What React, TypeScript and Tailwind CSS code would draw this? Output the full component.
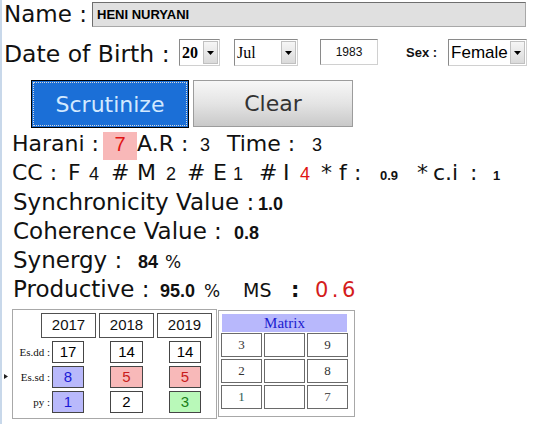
import React from "react";

const LS = "font-['Liberation_Sans',Arial,sans-serif]";
const TN = "font-['Liberation_Serif','Times_New_Roman',serif]";

function Arrow() {
  return (
    <div className="w-[15px] my-[1px] mr-[1px] flex items-center justify-center bg-gradient-to-b from-[#f6f6f6] to-[#dadada] border border-[#c0c0c0]">
      <svg width="7" height="4" viewBox="0 0 7 4">
        <path d="M0 0H7L3.5 4Z" fill="#000" />
      </svg>
    </div>
  );
}

function Sel({ w, children }: { w: string; children: React.ReactNode }) {
  return (
    <div className={"flex h-[27px] bg-white border border-[#8a8a8a] border-r-[#d0d0d0] border-b-[#d0d0d0] " + w}>
      <div className="flex-1 flex items-center pl-[2px] overflow-hidden">{children}</div>
      <Arrow />
    </div>
  );
}

function Cell({ w, bg, color, children }: { w: string; bg: string; color: string; children?: React.ReactNode }) {
  return (
    <div className={"h-[22px] flex items-center justify-center border border-[#454545] text-[15px] " + LS + " " + w + " " + bg + " " + color}>
      {children}
    </div>
  );
}

function MCell({ children, color }: { children?: React.ReactNode; color?: string }) {
  return (
    <div className={"w-[41px] h-[24px] flex items-center justify-center border border-[#6a6a6a] text-[13px] " + TN + " " + (color ?? "text-[#333]")}>
      {children}
    </div>
  );
}

export default function App() {
  return (
    <div className="relative w-[536px] h-[424px] overflow-hidden bg-white border-l-2 border-[#c8d8ea] font-['DejaVu_Sans',sans-serif] text-[#111]">
      {/* Name row */}
      <div className="flex h-[29px]">
        <div className="w-[90px] pl-[2px] text-[23px] leading-[29px] whitespace-nowrap">Name :</div>
        <div className="mt-[2px] w-[434px] h-[25px] bg-[#e0e0e0] border border-[#a8a8a8] border-t-[#6e6e6e] border-l-[#6e6e6e] pl-[4px] flex items-center">
          <span className={"text-[13px] font-bold text-black " + LS}>HENI NURYANI</span>
        </div>
      </div>

      {/* Date row */}
      <div className="flex items-start mt-[10px] h-[28px]">
        <div className="w-[177px] pl-[2px] text-[23.5px] leading-[30px] whitespace-nowrap">Date of Birth :</div>
        <Sel w="w-[41px]">
          <span className={"text-[16px] font-bold text-black " + TN}>20</span>
        </Sel>
        <div className="ml-[14px]">
          <Sel w="w-[64px]">
            <span className={"text-[16px] text-black " + TN}>Jul</span>
          </Sel>
        </div>
        <div className={"ml-[22px] w-[58px] h-[26px] border border-[#8a8a8a] border-r-[#d0d0d0] border-b-[#d0d0d0] flex items-center justify-center text-[12px] " + LS}>
          1983
        </div>
        <div className={"ml-[28px] h-[27px] flex items-center text-[13px] font-bold " + LS}>Sex :</div>
        <div className="ml-[11px]">
          <Sel w="w-[79px]">
            <span className={"text-[17px] text-black " + LS}>Female</span>
          </Sel>
        </div>
      </div>

      {/* Buttons */}
      <div className="flex mt-[13px] ml-[29px] items-start">
        <div className="w-[158px] h-[48px] border border-black p-[1px] bg-[#1b6fd7]">
          <div className="w-full h-full border border-dotted border-[#d8d8d8] flex items-center justify-center text-[22px] text-[#d2e9ff]">
            Scrutinize
          </div>
        </div>
        <div className="ml-[4px] w-[160px] h-[47px] border border-[#9c9c9c] bg-gradient-to-b from-[#f7f7f7] via-[#e4e4e4] to-[#c9c9c9] flex items-center justify-center text-[22px] text-[#333]">
          Clear
        </div>
      </div>

      {/* Result lines */}
      <div className="mt-[1px] pl-[10px] whitespace-pre">
        <div className="flex items-baseline h-[29.3px] text-[22px] leading-[29.3px]">
          <span className="w-[91px] shrink-0">Harani :</span>
          <span className={"inline-block w-[34px] h-[28px] shrink-0 bg-[#f8b8b8] text-center text-[20px] leading-[25px] text-[#e01414] " + LS}>7</span>
          <span className="w-[63px] shrink-0">A.R :</span>
          <span className={"w-[27px] shrink-0 text-[18px] " + LS}>3</span>
          <span className="w-[85px] shrink-0">Time :</span>
          <span className={"text-[18px] " + LS}>3</span>
        </div>
        <div className="flex items-baseline h-[29.3px] text-[22px] leading-[29.3px]">
          <span className="w-[56px] shrink-0">CC :</span>
          <span className="w-[21px] shrink-0">F</span>
          <span className={"w-[22px] shrink-0 text-[18px] " + LS}>4</span>
          <span className="w-[26px] shrink-0">#</span>
          <span className="w-[29px] shrink-0">M</span>
          <span className={"w-[21px] shrink-0 text-[18px] " + LS}>2</span>
          <span className="w-[26px] shrink-0">#</span>
          <span className="w-[20px] shrink-0">E</span>
          <span className={"w-[26px] shrink-0 text-[18px] " + LS}>1</span>
          <span className="w-[24px] shrink-0">#</span>
          <span className="w-[17px] shrink-0">I</span>
          <span className={"w-[21px] shrink-0 text-[18px] text-[#e01414] " + LS}>4</span>
          <span className="w-[18px] shrink-0">*</span>
          <span className="w-[15px] shrink-0">f</span>
          <span className="w-[26px] shrink-0">:</span>
          <span className={"w-[37px] shrink-0 text-[13px] font-bold " + LS}>0.9</span>
          <span className="w-[16px] shrink-0">*</span>
          <span className="w-[37px] shrink-0">c.i</span>
          <span className="w-[23px] shrink-0">:</span>
          <span className={"text-[13px] font-bold " + LS}>1</span>
        </div>
        <div className="flex items-baseline h-[29.3px] text-[23px] leading-[29.3px]">
          <span className="w-[246px] shrink-0 pl-[1px]">Synchronicity Value :</span>
          <span className={"text-[18px] font-bold " + LS}>1.0</span>
        </div>
        <div className="flex items-baseline h-[29.3px] text-[23px] leading-[29.3px]">
          <span className="w-[222px] shrink-0 pl-[1px]">Coherence Value :</span>
          <span className={"text-[18px] font-bold " + LS}>0.8</span>
        </div>
        <div className="flex items-baseline h-[29.3px] text-[23px] leading-[29.3px]">
          <span className="w-[126px] shrink-0 pl-[1px]">Synergy :</span>
          <span className={"w-[27px] shrink-0 text-[18px] font-bold " + LS}>84</span>
          <span className="text-[17px]">%</span>
        </div>
        <div className="flex items-baseline h-[29.3px] text-[23px] leading-[29.3px]">
          <span className="w-[148px] shrink-0 pl-[1px]">Productive :</span>
          <span className={"w-[44px] shrink-0 text-[18px] font-bold " + LS}>95.0</span>
          <span className="w-[39px] shrink-0 text-[17px]">%</span>
          <span className="w-[48px] shrink-0 text-[19px]">MS</span>
          <span className="w-[24px] shrink-0 text-[21px] font-bold">:</span>
          <span className="text-[21px] tracking-[3.5px] text-[#d41c1c]">0.6</span>
        </div>
      </div>

      {/* Bottom panels */}
      <div className="flex mt-[4px] ml-[10px] items-start">
        <div className="w-[205px] h-[110px] border border-[#a8a8a8]">
          <div className="flex mt-[3px] ml-[28px] gap-[3px]">
            {["2017", "2018", "2019"].map((y) => (
              <div key={y} className={"w-[55px] h-[25px] border border-[#505050] flex items-center justify-center text-[15px] " + LS}>
                {y}
              </div>
            ))}
          </div>
          <div className="flex items-center mt-[3px]">
            <div className={"w-[37px] text-right text-[11px] " + TN}>Es.dd :</div>
            <div className="ml-[2px]"><Cell w="w-[32px]" bg="bg-white" color="text-black">17</Cell></div>
            <div className="ml-[26px]"><Cell w="w-[33px]" bg="bg-white" color="text-black">14</Cell></div>
            <div className="ml-[26px]"><Cell w="w-[32px]" bg="bg-white" color="text-black">14</Cell></div>
          </div>
          <div className="flex items-center mt-[3px]">
            <div className={"w-[37px] text-right text-[11px] " + TN}>Es.sd :</div>
            <div className="ml-[2px]"><Cell w="w-[32px]" bg="bg-[#b9b9fb]" color="text-[#1a1ad6]">8</Cell></div>
            <div className="ml-[26px]"><Cell w="w-[33px]" bg="bg-[#f8b9b9]" color="text-[#c81c1c]">5</Cell></div>
            <div className="ml-[26px]"><Cell w="w-[32px]" bg="bg-[#f8b9b9]" color="text-[#c81c1c]">5</Cell></div>
          </div>
          <div className="flex items-center mt-[3px]">
            <div className={"w-[37px] text-right text-[11px] " + TN}>py :</div>
            <div className="ml-[2px]"><Cell w="w-[32px]" bg="bg-[#b9b9fb]" color="text-[#1a1ad6]">1</Cell></div>
            <div className="ml-[26px]"><Cell w="w-[33px]" bg="bg-white" color="text-black">2</Cell></div>
            <div className="ml-[26px]"><Cell w="w-[32px]" bg="bg-[#b9f9b9]" color="text-[#1a801a]">3</Cell></div>
          </div>
        </div>
        <div className="ml-[1px] mt-[1px] w-[137px] h-[107px] border border-[#a8a8a8]">
          <div className={"mt-[3px] ml-[3px] w-[125px] h-[18px] bg-[#b8b8fc] flex items-center justify-center text-[15px] text-[#1c1cd0] " + TN}>
            Matrix
          </div>
          <div className="ml-[2px] mt-[1px] grid grid-cols-[41px_41px_41px] gap-[2px]">
            <MCell>3</MCell>
            <MCell />
            <MCell>9</MCell>
            <MCell>2</MCell>
            <MCell />
            <MCell>8</MCell>
            <MCell color="text-[#2d5d55]">1</MCell>
            <MCell />
            <MCell color="text-[#555]">7</MCell>
          </div>
        </div>
      </div>

      {/* tiny marker at left edge */}
      <svg className="absolute left-[2px] top-[374px]" width="4" height="5" viewBox="0 0 4 5">
        <path d="M0 0L4 2.5L0 5Z" fill="#222" />
      </svg>
    </div>
  );
}
